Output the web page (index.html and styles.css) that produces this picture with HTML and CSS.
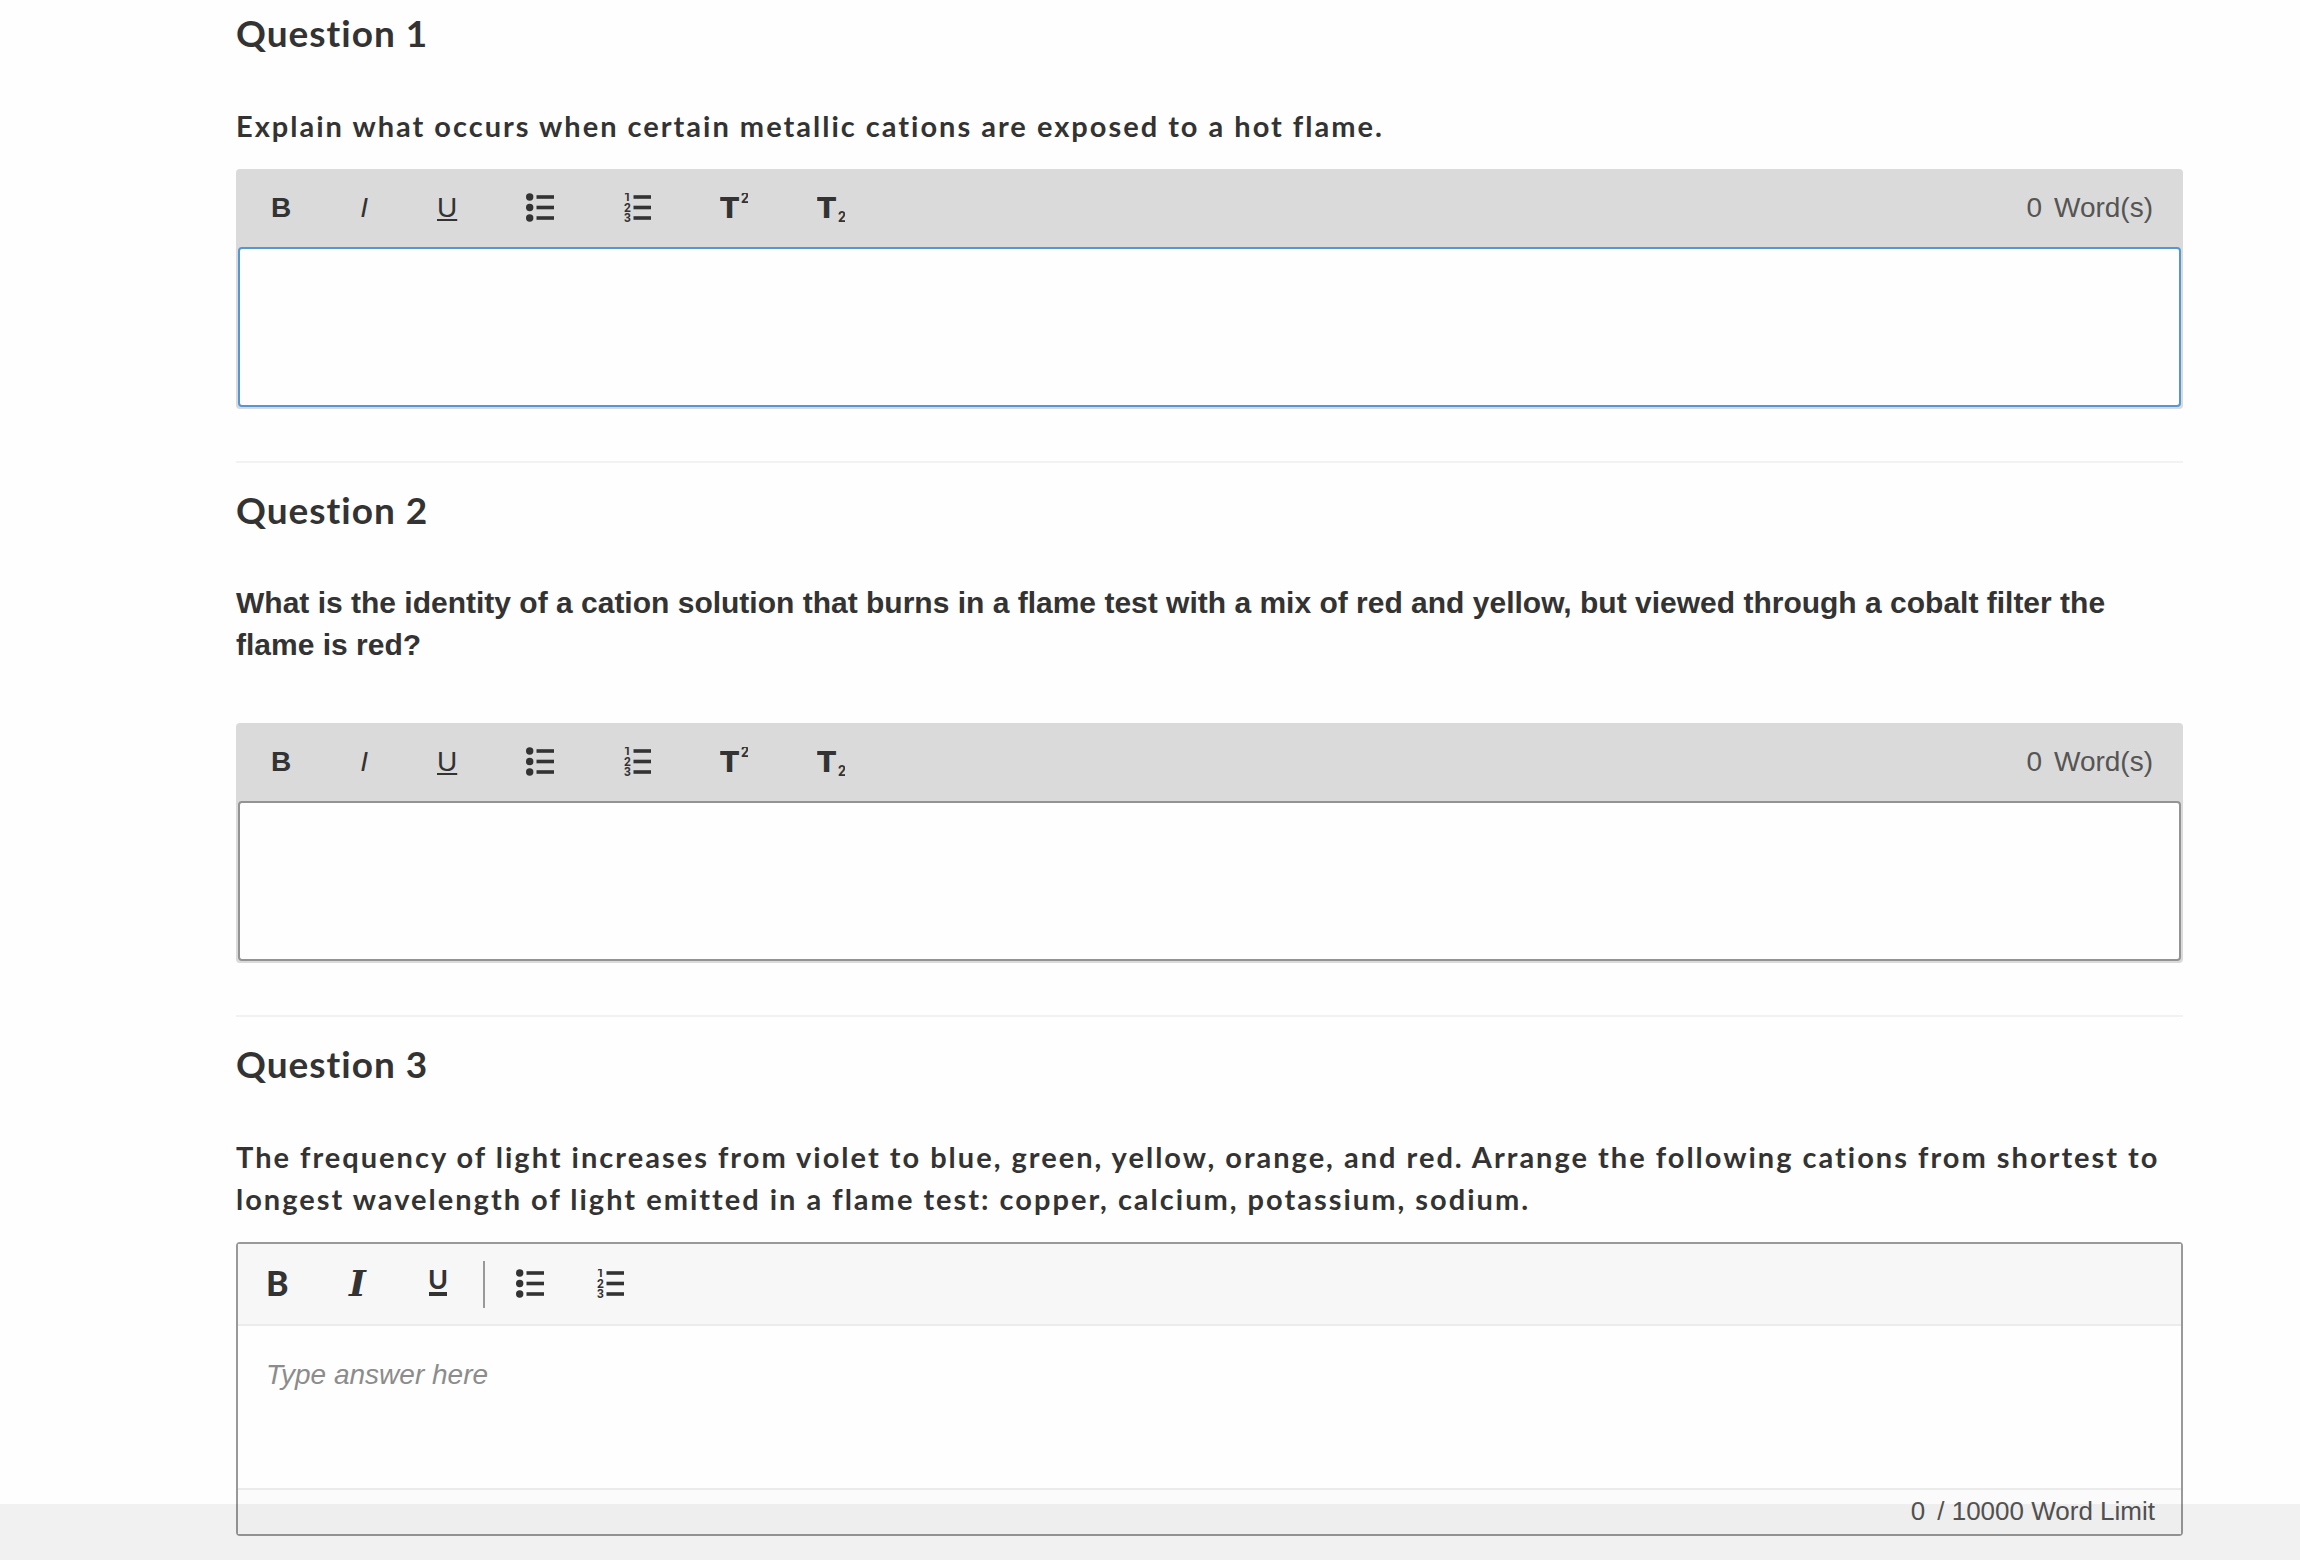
FILE: index.html
```html
<!DOCTYPE html>
<html lang="en">
<head>
  <meta charset="UTF-8">
  <meta name="viewport" content="width=device-width, initial-scale=1.0">
  <title>Flame Test Questions</title>
  <link rel="stylesheet" href="styles.css">
</head>
<body>
  <!-- shared toolbar icons -->
  <svg class="sprite" aria-hidden="true">
    <symbol id="icon-bullets" viewBox="0 0 28 30">
      <circle cx="3.7" cy="4" r="3.7"/>
      <circle cx="3.7" cy="14.5" r="3.7"/>
      <circle cx="3.7" cy="25" r="3.7"/>
      <rect x="10.5" y="2.2" width="17.5" height="3.6"/>
      <rect x="10.5" y="12.7" width="17.5" height="3.6"/>
      <rect x="10.5" y="23.2" width="17.5" height="3.6"/>
    </symbol>
    <symbol id="icon-numbers" viewBox="0 0 28 30">
      <text class="digit" x="1" y="8">1</text>
      <text class="digit" x="1" y="18.6">2</text>
      <text class="digit" x="1" y="29.2">3</text>
      <rect x="10.5" y="2.2" width="18" height="3.6"/>
      <rect x="10.5" y="12.7" width="18" height="3.6"/>
      <rect x="10.5" y="23.2" width="18" height="3.6"/>
    </symbol>
    <symbol id="icon-super" viewBox="0 0 28 30">
      <text class="tee" x="0" y="24.5">T</text>
      <text class="script" x="21" y="10">2</text>
    </symbol>
    <symbol id="icon-sub" viewBox="0 0 28 30">
      <text class="tee" x="0" y="24.5">T</text>
      <text class="script" x="21" y="28.5">2</text>
    </symbol>
  </svg>

  <main class="assessment">
    <section class="question">
      <h2>Question 1</h2>
      <label class="prompt" for="answer1">Explain what occurs when certain metallic cations are exposed to a hot flame.</label>
      <div class="editor">
        <div class="toolbar">
          <button type="button" class="bold" aria-label="Bold">B</button>
          <button type="button" class="italic" aria-label="Italic">I</button>
          <button type="button" class="underline" aria-label="Underline">U</button>
          <button type="button" aria-label="Bulleted list"><svg class="icon"><use href="#icon-bullets"/></svg></button>
          <button type="button" aria-label="Numbered list"><svg class="icon"><use href="#icon-numbers"/></svg></button>
          <button type="button" aria-label="Superscript"><svg class="icon"><use href="#icon-super"/></svg></button>
          <button type="button" aria-label="Subscript"><svg class="icon"><use href="#icon-sub"/></svg></button>
          <div class="word-count"><span>0</span><span>Word(s)</span></div>
        </div>
        <textarea id="answer1" class="answer active"></textarea>
      </div>
    </section>

    <section class="question">
      <h2>Question 2</h2>
      <label class="prompt plain" for="answer2">What is the identity of a cation solution that burns in a flame test with a mix of red and yellow, but viewed through a cobalt filter the flame is red?</label>
      <div class="editor">
        <div class="toolbar">
          <button type="button" class="bold" aria-label="Bold">B</button>
          <button type="button" class="italic" aria-label="Italic">I</button>
          <button type="button" class="underline" aria-label="Underline">U</button>
          <button type="button" aria-label="Bulleted list"><svg class="icon"><use href="#icon-bullets"/></svg></button>
          <button type="button" aria-label="Numbered list"><svg class="icon"><use href="#icon-numbers"/></svg></button>
          <button type="button" aria-label="Superscript"><svg class="icon"><use href="#icon-super"/></svg></button>
          <button type="button" aria-label="Subscript"><svg class="icon"><use href="#icon-sub"/></svg></button>
          <div class="word-count"><span>0</span><span>Word(s)</span></div>
        </div>
        <textarea id="answer2" class="answer"></textarea>
      </div>
    </section>

    <section class="question">
      <h2>Question 3</h2>
      <label class="prompt" for="answer3">The frequency of light increases from violet to blue, green, yellow, orange, and red. Arrange the following cations from shortest to longest wavelength of light emitted in a flame test: copper, calcium, potassium, sodium.</label>
      <div class="essay">
        <div class="essay-toolbar">
          <button type="button" aria-label="Bold"><svg class="icon"><text class="essay-b" x="2" y="27">B</text></svg></button>
          <button type="button" aria-label="Italic"><svg class="icon"><text class="essay-i" x="5" y="27">I</text></svg></button>
          <button type="button" aria-label="Underline"><svg class="icon"><text class="essay-u" x="14" y="20">U</text><rect x="5" y="23" width="18" height="4"/></svg></button>
          <span class="divider"></span>
          <button type="button" aria-label="Bulleted list"><svg class="icon"><use href="#icon-bullets"/></svg></button>
          <button type="button" aria-label="Numbered list"><svg class="icon"><use href="#icon-numbers"/></svg></button>
        </div>
        <textarea id="answer3" class="essay-answer" placeholder="Type answer here"></textarea>
        <div class="word-limit"><span>0</span><span>/ 10000 Word Limit</span></div>
      </div>
    </section>
  </main>

  <div class="bottom-bar"></div>
</body>
</html>
```
FILE: styles.css
```css
* {
  box-sizing: border-box;
}
body {
  margin: 0;
  background: #fefefe;
  color: #333;
  font-family: "Liberation Sans", Arial, sans-serif;
}
.sprite {
  display: none;
}
.assessment {
  padding: 11px 117px 25px 236px;
}

/* questions */
.question + .question {
  margin-top: 52px;
  padding-top: 25px;
  border-top: 2px solid #f2f2f2;
}
.question h2 {
  margin: 0 0 50px;
  font-family: Lato, sans-serif;
  font-size: 37px;
  line-height: 44px;
  font-weight: 700;
  letter-spacing: 1px;
}
.prompt {
  display: block;
  margin-bottom: 22px;
  font-family: Lato, sans-serif;
  font-size: 29px;
  line-height: 42px;
  font-weight: 700;
  letter-spacing: 2px;
}
.prompt.plain {
  margin-bottom: 57px;
  font-family: "Liberation Sans", Arial, sans-serif;
  font-size: 30px;
  letter-spacing: normal;
}

/* buttons and icons */
button {
  display: flex;
  align-items: center;
  justify-content: center;
  padding: 0;
  border: none;
  background: none;
  color: #333;
  font-family: inherit;
  font-size: 28px;
  line-height: 32px;
  cursor: pointer;
}
.icon {
  display: block;
  width: 28px;
  height: 30px;
  fill: #333;
  overflow: visible;
}
.digit {
  font: 700 12px Roboto, sans-serif;
}
.tee {
  font: 700 28px "DejaVu Sans", sans-serif;
}
.script {
  font: 700 14px Roboto, sans-serif;
}
.bold {
  font-weight: 700;
}
.italic {
  font-style: italic;
}
.underline {
  text-decoration: underline;
}

/* grey editor */
.editor {
  padding: 0 2px 2px;
  border-radius: 4px;
  background: #dadada;
}
.toolbar {
  display: flex;
  align-items: center;
  gap: 69px;
  height: 78px;
  padding: 0 28px 0 33px;
}
.word-count {
  display: flex;
  gap: 12px;
  margin-left: auto;
  color: #555;
  font-size: 28px;
  line-height: 32px;
}
textarea {
  display: block;
  width: 100%;
  margin: 0;
  resize: none;
  outline: none;
  background: #fefefe;
  color: #333;
  font-family: inherit;
  font-size: 28px;
  line-height: 36px;
}
.answer {
  height: 160px;
  padding: 20px 28px;
  border: 2px solid #939393;
  border-radius: 4px;
}
.answer.active {
  border-color: #5596d6;
}

/* essay editor */
.essay {
  border: 2px solid #999;
  border-radius: 4px;
}
.essay-toolbar {
  display: flex;
  align-items: center;
  height: 82px;
  border-bottom: 2px solid #ebebeb;
  background: #f7f7f7;
}
.essay-toolbar button {
  width: 80px;
  height: 80px;
}
.divider {
  width: 2px;
  height: 47px;
  margin: 0 5px;
  background: #999;
}
.essay-b {
  font: 900 34px Lato, sans-serif;
}
.essay-i {
  font: italic 700 36px "DejaVu Serif", serif;
}
.essay-u {
  font: 700 27px Lato, sans-serif;
  text-anchor: middle;
}
.essay-answer {
  height: 162px;
  padding: 31px 28px;
  border: none;
}
.essay-answer::placeholder {
  color: #8c8c8c;
  font-style: italic;
}
.word-limit {
  display: flex;
  justify-content: flex-end;
  gap: 12px;
  padding: 5px 26px 7px;
  border-top: 2px solid #ebebeb;
  background: #fbfbfb;
  color: #555;
  font-size: 26px;
  line-height: 32px;
}

/* strip along the bottom of the window */
.bottom-bar {
  position: fixed;
  right: 0;
  bottom: 0;
  left: 0;
  height: 56px;
  background: rgba(0, 0, 0, 0.05);
  pointer-events: none;
}
```
